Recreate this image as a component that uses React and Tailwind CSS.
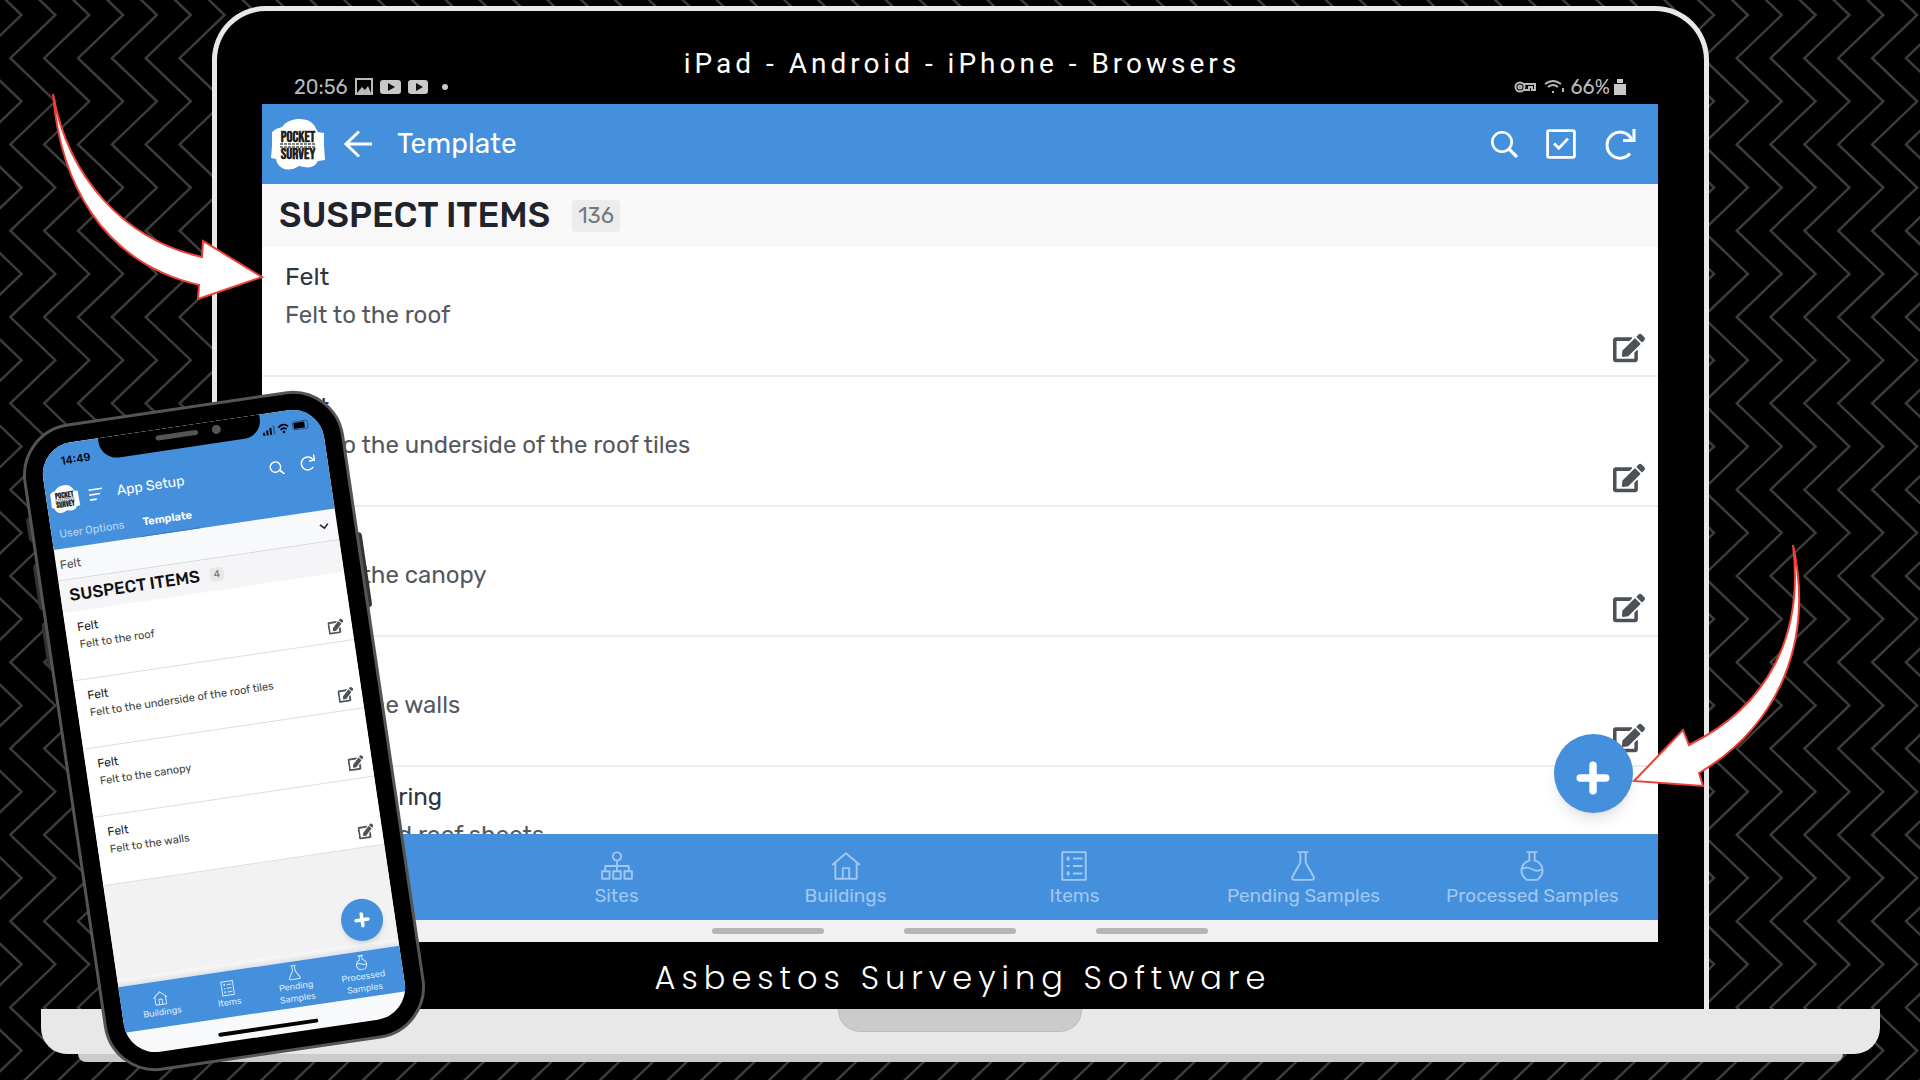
import { FaEdit } from "react-icons/fa";

function Backdrop() {
  const lines = [];
  for (let i = -2; i < 60; i++) {
    const x = 21.5 + i * 33.85;
    let d = "";
    for (let k = -1; k < 26; k++) {
      const y = 15 + k * 43.15;
      d += (d ? "L" : "M") + (k % 2 === 0 ? x : x - 45) + " " + y;
    }
    lines.push(<path key={i} d={d} />);
  }
  return (
    <svg className="absolute inset-0 h-full w-full" viewBox="0 0 1920 1080" preserveAspectRatio="xMidYMid slice" fill="none" stroke="#3c3c3c" strokeWidth="2.500" aria-hidden="true">
      {lines}
    </svg>
  );
}

function Logo({ className }) {
  return (
    <svg className={className} viewBox="0 0 54 52" aria-label="Pocket Survey">
      <path fill="#fff" d="M1 14L5 11L11 9Q16 2 26 1Q38 0 43 7L47 14L53 15L53 28L54 42L47 43Q43 51 33 49L28 48Q19 54 11 50Q6 47 5 41L0 40L1 28Z" />
      <g fill="#222" fontFamily="'Bebas Neue', Oswald, 'Roboto Condensed', 'Liberation Sans Narrow', Roboto, sans-serif" fontWeight="700" fontSize="15" textAnchor="middle">
        <text x="27" y="24">POCKET</text>
        <text x="27" y="41">SURVEY</text>
      </g>
      <path d="M9 26H45M9 29H45" stroke="#555" strokeWidth="1.500" strokeDasharray="3 1" />
    </svg>
  );
}

function SearchIcon({ className }) {
  return (
    <svg className={className} viewBox="0 0 28 28" fill="none" stroke="currentColor" strokeWidth="2.600" aria-hidden="true">
      <circle cx="12" cy="12" r="9.700" />
      <path d="M19 19L27 27" strokeWidth="3.200" />
    </svg>
  );
}

function RefreshIcon({ className }) {
  return (
    <svg className={className} viewBox="0 0 32 32" fill="none" stroke="currentColor" strokeWidth="3" aria-hidden="true">
      <path d="M26 25.500A13 13 0 1 1 27.500 11" />
      <path d="M30 1V12.500H19" />
    </svg>
  );
}

function CheckSquareIcon({ className }) {
  return (
    <svg className={className} viewBox="0 0 28 28" fill="none" stroke="currentColor" strokeWidth="2.600" aria-hidden="true">
      <rect x="1.500" y="1.500" width="25" height="25" rx="1.500" />
      <path d="M7.500 13.500L12 18L20.500 9" />
    </svg>
  );
}

function BackIcon({ className }) {
  return (
    <svg className={className} viewBox="0 0 28 28" fill="none" stroke="currentColor" strokeWidth="3" aria-hidden="true">
      <path d="M28 14H2M15 1.500L2 14L15 26.500" />
    </svg>
  );
}

const tabPaths = {
  home: "M3 14L15 3L27 14M6 12V27H24V12M12 27V17H18V27",
  sites: "M15 2A4 4 0 1 1 14.990 2M15 10V19M4 19V15H26V19M1 20H8V27H1ZM11.500 20H18.500V27H11.500ZM22 20H29V27H22Z",
  buildings: "M2 14L15 3L28 14M5 12V27H25V12M12 27V17H18V27",
  items: "M4 2H26V28H4ZM8 8H11M14 8H23M8 15H11M14 15H23M8 22H11M14 22H23M9.500 6V10M9.500 20V24",
  pending: "M10 2H20M12.500 2V12L5 25Q4 28 7 28H23Q26 28 25 25L17.500 12V2",
  processed: "M10 2H20M12.500 2V10A9.500 9.500 0 0 0 8 26L10 28H20L22 26A9.500 9.500 0 0 0 17.500 10V2M5.500 18Q10 15 15 18T24.500 18",
};

function TabIcon({ name, className }) {
  return (
    <svg className={className} viewBox="0 0 30 30" fill="none" stroke="currentColor" strokeWidth="1.800" strokeLinejoin="round" aria-hidden="true">
      <path d={tabPaths[name]} />
    </svg>
  );
}

function Plus({ className }) {
  return (
    <svg className={className} viewBox="0 0 32 32" stroke="currentColor" strokeWidth="7" strokeLinecap="round" aria-hidden="true">
      <path d="M4 16H28M16 4V28" />
    </svg>
  );
}

const feltItems = [
  ["Felt", "Felt to the roof"],
  ["Felt", "Felt to the underside of the roof tiles"],
  ["Felt", "Felt to the canopy"],
  ["Felt", "Felt to the walls"],
];

const tabletTabs = [
  ["home", ""],
  ["sites", "Sites"],
  ["buildings", "Buildings"],
  ["items", "Items"],
  ["pending", "Pending Samples"],
  ["processed", "Processed Samples"],
];

function TabletScreen() {
  return (
    <section className="relative flex flex-1 flex-col overflow-hidden font-['Rubik','Roboto',sans-serif]">
      <div className="flex h-[35px] items-center px-8 text-xl text-[#b9b9b9]">
        <span>20:56</span>
        <svg className="ml-1.5 h-[18px] w-[76px]" viewBox="0 0 76 18" aria-hidden="true">
          <rect x="2" y="1" width="16" height="15" fill="none" stroke="#b9b9b9" strokeWidth="2" />
          <path d="M3 15L8 9L11 12L14 8L17 15Z" fill="#b9b9b9" />
          <rect x="26" y="2" width="21" height="14" rx="3" fill="#c9c9c9" />
          <path d="M34 5L41 9L34 13Z" fill="#111" />
          <rect x="54" y="2" width="20" height="14" rx="3" fill="#c9c9c9" />
          <path d="M62 5L69 9L62 13Z" fill="#111" />
        </svg>
        <span className="ml-3 size-1.5 rounded-full bg-[#c9c9c9]" />
        <svg className="mr-1 ml-auto h-[18px] w-[54px]" viewBox="0 0 52 18" fill="none" stroke="#b9b9b9" strokeWidth="2" aria-hidden="true">
          <circle cx="6" cy="9" r="4.500" />
          <circle cx="6" cy="9" r="1.500" />
          <path d="M9 6H21V12H18V9H15V12H9" />
          <path d="M31 6Q39 0 47 6M34 9Q39 5 44 9M39 13V15M49 10V14" />
        </svg>
        <span>66%</span>
        <svg className="ml-1 h-[16px] w-[12px]" viewBox="0 0 12 16" fill="#c9c9c9" aria-hidden="true">
          <path d="M0 5H12V16H0ZM3 0H9V4H3Z" />
        </svg>
      </div>
      <header className="flex h-20 items-center bg-[#4590dc] pr-[22px] pl-[9px] text-white">
        <Logo className="h-[52px] w-[54px]" />
        <button aria-label="Back" className="ml-[19px]"><BackIcon className="size-7" /></button>
        <h1 className="ml-[25px] text-[28px]">Template</h1>
        <div className="ml-auto flex items-center gap-7">
          <button aria-label="Search"><SearchIcon className="size-7" /></button>
          <button aria-label="Select"><CheckSquareIcon className="size-[30px]" /></button>
          <button aria-label="Refresh"><RefreshIcon className="size-8" /></button>
        </div>
      </header>
      <div className="flex h-[63px] items-center gap-[22px] bg-[#f8f8f8] pl-[17px]">
        <h2 className="text-[35px] font-medium text-[#20242a]">SUSPECT ITEMS</h2>
        <span className="rounded bg-[#ececec] px-1.5 text-[22px] leading-8 text-[#75797e]">136</span>
      </div>
      <ul className="h-0 flex-auto overflow-hidden bg-white text-2xl">
        {feltItems.map(([t, d], i) => (
          <li key={i} className="relative h-[130px] border-b-2 border-[#ededee] pt-[11px] pl-[23px]">
            <p className="text-[25px] leading-[38px] text-[#2f3640]">{t}</p>
            <p className="leading-[38px] text-[#54595f]">{d}</p>
            <button aria-label="Edit item" className="absolute right-[13px] bottom-[11px] text-[#4d5258]"><FaEdit className="size-8" /></button>
          </li>
        ))}
        <li className="pt-[11px] pl-[23px]">
          <p className="text-2xl leading-[38px] text-[#2f3640]">Roof Covering</p>
          <p className="leading-[38px] text-[#54595f]">Corrugated roof sheets</p>
        </li>
      </ul>
      <button aria-label="Add item" className="absolute right-[25px] bottom-[129px] flex size-[79px] items-center justify-center rounded-full bg-[#4590dc] text-white shadow-lg">
        <Plus className="mt-2 size-[34px]" />
      </button>
      <nav className="grid h-[86px] grid-cols-6 bg-[#4590dc] px-[11px] text-[#9fc7f1]">
        {tabletTabs.map(([n, l]) => (
          <a key={n} href={"#" + n} aria-label={n} className="flex flex-col items-center pt-4 text-[19px] leading-7">
            <TabIcon name={n} className="size-8" />
            {l}
          </a>
        ))}
      </nav>
      <div className="flex h-[22px] justify-center gap-20 bg-[#f1f1f1] pt-2">
        <span className="h-1.5 w-28 rounded-full bg-[#b5b5b5]" />
        <span className="h-1.5 w-28 rounded-full bg-[#b5b5b5]" />
        <span className="h-1.5 w-28 rounded-full bg-[#b5b5b5]" />
      </div>
    </section>
  );
}

function Laptop() {
  return (
    <div className="relative flex min-h-screen flex-col items-center pt-1.5 pb-[18px] pl-px">
      <div className="flex w-[78%] flex-1 flex-col rounded-t-[54px] border-5 border-b-0 border-[#e8e8e8] bg-black pr-[46px] pl-[45px]">
        <p className="h-[58px] pt-[33px] pl-1 text-center font-['Roboto'] text-[28px] leading-10 tracking-[4px] text-white">iPad - Android - iPhone - Browsers</p>
        <TabletScreen />
        <p className="h-[67px] pt-4 pl-1.5 text-center font-['Poppins','Lato',sans-serif] text-[32px] leading-10 font-light tracking-[6px] text-white">Asbestos Surveying Software</p>
      </div>
      <div className="flex h-[45px] w-[95.8%] justify-center rounded-b-[26px] bg-[#e8e8e8]">
        <div className="h-[23px] w-[244px] rounded-b-[22px] border border-t-0 border-[#bdbdbd] bg-[#cbcbcb]" />
      </div>
      <div className="h-2 w-[92%] rounded-b-lg bg-[#cbcbcb]" />
    </div>
  );
}

const phoneTabs = [
  ["buildings", "Buildings"],
  ["items", "Items"],
  ["pending", "Pending Samples"],
  ["processed", "Processed Samples"],
];

function Phone() {
  return (
    <div className="absolute top-[404px] left-[62px] w-[324px] rotate-[-8.4deg]">
      <span className="absolute top-[87px] -left-[3px] h-[25px] w-2 rounded bg-[#333]" />
      <span className="absolute top-[134px] -left-[3px] h-[47px] w-2 rounded bg-[#333]" />
      <span className="absolute top-[193px] -left-[3px] h-[47px] w-2 rounded bg-[#333]" />
      <span className="absolute top-[150px] -right-[3px] h-[76px] w-2 rounded bg-[#333]" />
      <div className="relative rounded-[52px] border-3 border-[#555] bg-black px-[17px] py-4 font-['Rubik','Roboto',sans-serif]">
        <section className="relative flex h-[616px] flex-col overflow-hidden rounded-[32px] bg-[#f8f9fb]">
          <div className="absolute top-0 left-[60px] h-[22px] w-[163px] rounded-b-[18px] bg-black">
            <span className="absolute top-1.5 left-[57px] h-[5px] w-[43px] rounded-full bg-[#555]" />
            <span className="absolute top-1 left-[114px] size-[9px] rounded-full bg-[#555]" />
          </div>
          <header className="h-[104px] shrink-0 bg-[#4590dc] text-white">
            <div className="flex h-[34px] items-center justify-between pr-3 pl-5 text-black">
              <span className="font-['Inter'] text-[11px] font-semibold">14:49</span>
              <svg className="h-3 w-12" viewBox="0 0 48 12" aria-hidden="true">
                <path d="M0 8H2V11H0ZM3.500 6H5.500V11H3.500ZM7 4H9V11H7Z" />
                <path d="M10.500 2H12.500V11H10.500Z" opacity=".3" />
                <path d="M16 5Q21 0 26 5M18 7.500Q21 4.500 24 7.500" fill="none" stroke="#000" strokeWidth="1.600" />
                <circle cx="21" cy="10" r="1.300" />
                <rect x="30.500" y="1.500" width="15" height="8" rx="2" fill="none" stroke="#000" opacity=".4" />
                <rect x="31.500" y="2.500" width="11" height="6" rx="1" />
              </svg>
            </div>
            <div className="flex h-[42px] items-center pr-3 pl-1">
              <Logo className="h-7 w-[29px]" />
              <button aria-label="Menu" className="ml-2.5">
                <svg className="size-3.5" viewBox="0 0 14 14" stroke="#fff" strokeWidth="1.600" aria-hidden="true"><path d="M0 2H14M0 7H11M0 12H7" /></svg>
              </button>
              <h1 className="ml-3.5 text-sm">App Setup</h1>
              <button aria-label="Search" className="mr-4 ml-auto"><SearchIcon className="size-[15px]" /></button>
              <button aria-label="Refresh"><RefreshIcon className="size-4" /></button>
            </div>
            <div className="flex h-7 pl-2 text-[11px] leading-7">
              <button className="w-[78px] text-left text-[#b9d6f5]">User Options</button>
              <button className="border-b border-[#3677bd] px-1.5 font-semibold">Template</button>
            </div>
          </header>
          <div className="flex h-8 shrink-0 items-center justify-between border-b border-[#d5d6d9] pr-2 pl-1 text-xs text-[#4b4f55]">
            <span>Felt</span>
            <svg className="h-2 w-2.5" viewBox="0 0 10 8" fill="none" stroke="#222" strokeWidth="1.600" aria-hidden="true"><path d="M1 2L5 6L9 2" /></svg>
          </div>
          <div className="flex h-8 shrink-0 items-center gap-2.5 bg-[#f5f5f7] pl-[9px]">
            <h2 className="text-[17px] font-medium text-[#111]">SUSPECT ITEMS</h2>
            <span className="rounded-sm bg-[#e7e7e8] px-1 text-[10px] leading-[14px] text-[#666]">4</span>
          </div>
          <ul className="shrink-0 bg-white text-xs">
            {feltItems.map(([t, d], i) => (
              <li key={i} className="relative h-[69px] border-b border-[#dedede] pt-[7px] pl-3">
                <p className="leading-[18px] text-[#222]">{t}</p>
                <p className="text-[11px] leading-[18px] text-[#444]">{d}</p>
                <button aria-label="Edit item" className="absolute right-2 bottom-[7px] text-[#4d5258]"><FaEdit className="size-4" /></button>
              </li>
            ))}
          </ul>
          <div className="flex-1 bg-[#f2f2f2]" />
          <div className="h-[7px] bg-linear-to-b from-[#f8f8f8] to-[#dfe3e6]" />
          <button aria-label="Add item" className="absolute right-3 bottom-20 flex size-[42px] items-center justify-center rounded-full bg-[#4590dc] text-white shadow-md">
            <Plus className="size-4" />
          </button>
          <nav className="grid h-[46px] shrink-0 grid-cols-4 bg-[#4590dc] px-1.5 text-[#dbeafa]">
            {phoneTabs.map(([n, l]) => (
              <a key={n} href={"#phone-" + n} className="flex flex-col items-center justify-center text-center text-[9px] leading-3">
                <TabIcon name={n} className="size-4" />
                {l}
              </a>
            ))}
          </nav>
          <div className="flex h-6 shrink-0 justify-center pt-3.5"><span className="h-1 w-[101px] rounded-full bg-black" /></div>
        </section>
      </div>
    </div>
  );
}

export default function App() {
  return (
    <main className="relative min-h-screen overflow-hidden bg-black">
      <Backdrop />
      <Laptop />
      <Phone />
      <svg className="absolute top-[90px] left-[48px] h-[214px] w-[218px]" viewBox="48 90 218 214" fill="#fff" stroke="#ee4035" strokeWidth="2" aria-hidden="true">
        <path d="M53 94C60 180 100 262 199 285L198 299L262 277L203 241L202 257C125 240 68 178 53 94Z" />
      </svg>
      <svg className="absolute top-[540px] right-[116px] h-[250px] w-[174px]" viewBox="1630 540 174 250" fill="#fff" stroke="#ee4035" strokeWidth="2" aria-hidden="true">
        <path d="M1793 545C1814 640 1780 725 1699 773L1703 786L1634 781L1683 730L1689 745C1768 706 1804 636 1793 545Z" />
      </svg>
    </main>
  );
}
